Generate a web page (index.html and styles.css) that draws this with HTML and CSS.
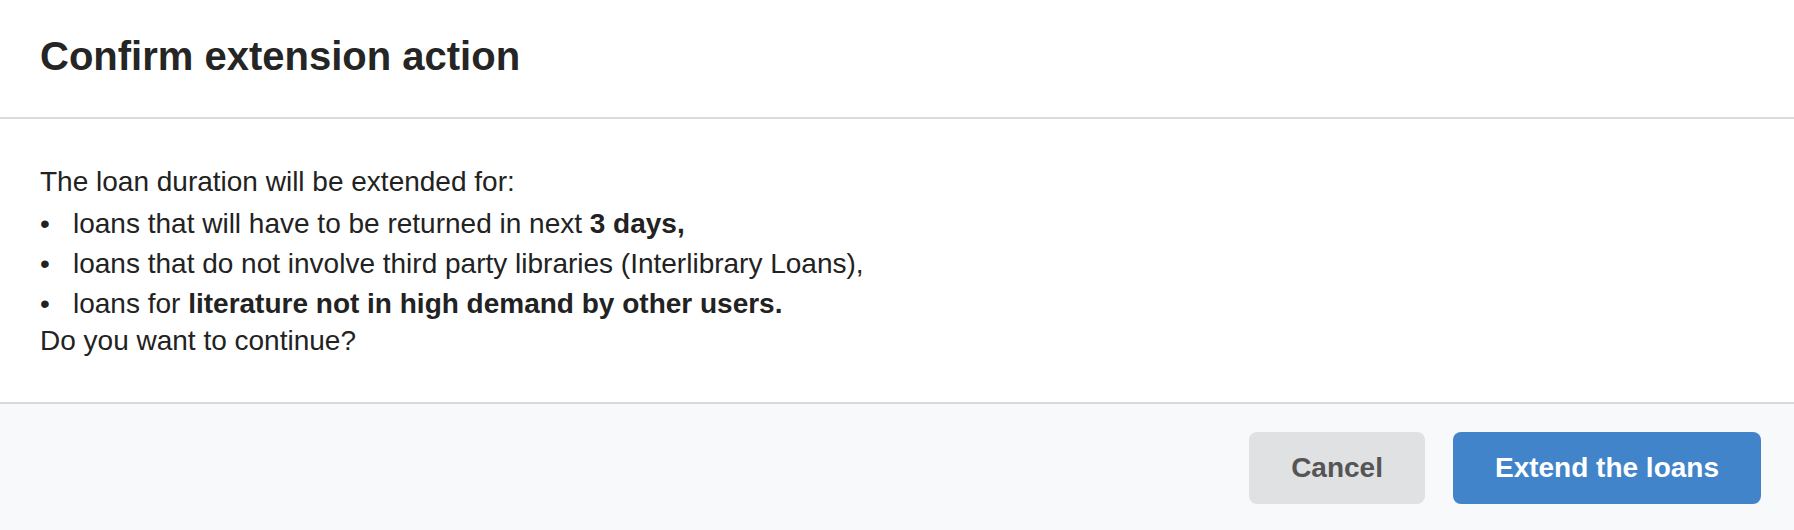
FILE: index.html
```html
<!DOCTYPE html>
<html lang="en">
<head>
<meta charset="utf-8">
<title>Confirm extension action</title>
<link rel="stylesheet" href="styles.css">
</head>
<body>
<div class="dialog">
  <header class="dialog-header">
    <h1 class="dialog-title">Confirm extension action</h1>
  </header>
  <div class="dialog-body">
    <p class="intro">The loan duration will be extended for:</p>
    <ul class="conditions">
      <li><span class="item-text">loans that will have to be returned in next <strong>3 days,</strong></span></li>
      <li><span class="item-text">loans that do not involve third party libraries (Interlibrary Loans),</span></li>
      <li><span class="item-text">loans for <strong>literature not in high demand by other users.</strong></span></li>
    </ul>
    <p class="question">Do you want to continue?</p>
  </div>
  <footer class="dialog-footer">
    <button class="btn btn-cancel" type="button">Cancel</button>
    <button class="btn btn-primary" type="button">Extend the loans</button>
  </footer>
</div>
</body>
</html>
```
FILE: styles.css
```css
* {
  box-sizing: border-box;
}

html, body {
  margin: 0;
  padding: 0;
  background: #ffffff;
}

body {
  font-family: "Liberation Sans", Arial, Helvetica, sans-serif;
  color: #222222;
}

.dialog {
  display: flex;
  flex-direction: column;
  width: 100%;
  height: 530px;
  background: #ffffff;
}

.dialog-header {
  padding: 33px 40px 38px;
  border-bottom: 2px solid #dcdcdd;
}

.dialog-title {
  margin: 0;
  font-size: 40px;
  line-height: 46px;
  font-weight: 700;
  color: #252525;
}

.dialog-body {
  padding: 47px 40px 45px;
  font-size: 28px;
  line-height: 32px;
  color: #222222;
}

.intro,
.question {
  margin: 0;
}

.conditions {
  list-style: none;
  margin: 10px 0 5px;
  padding: 0;
}

.conditions li {
  display: flex;
  margin-bottom: 8px;
}

.conditions li:last-child {
  margin-bottom: 0;
}

.conditions li::before {
  content: "\2022";
  flex: 0 0 33px;
  width: 33px;
}

.conditions strong {
  font-weight: 700;
}

.dialog-footer {
  flex: 1;
  display: flex;
  justify-content: flex-end;
  align-items: flex-start;
  gap: 28px;
  padding: 28px 33px 26px;
  background: #f8f9fa;
  border-top: 2px solid #d8d9db;
}

.btn {
  height: 72px;
  padding: 0 42px;
  border: none;
  border-radius: 8px;
  font-family: "Liberation Sans", Arial, Helvetica, sans-serif;
  font-size: 28px;
  font-weight: 700;
  line-height: 72px;
  cursor: pointer;
}

.btn-cancel {
  background: #e0e1e3;
  color: #555555;
}

.btn-primary {
  background: #4284c9;
  color: #ffffff;
}
```
